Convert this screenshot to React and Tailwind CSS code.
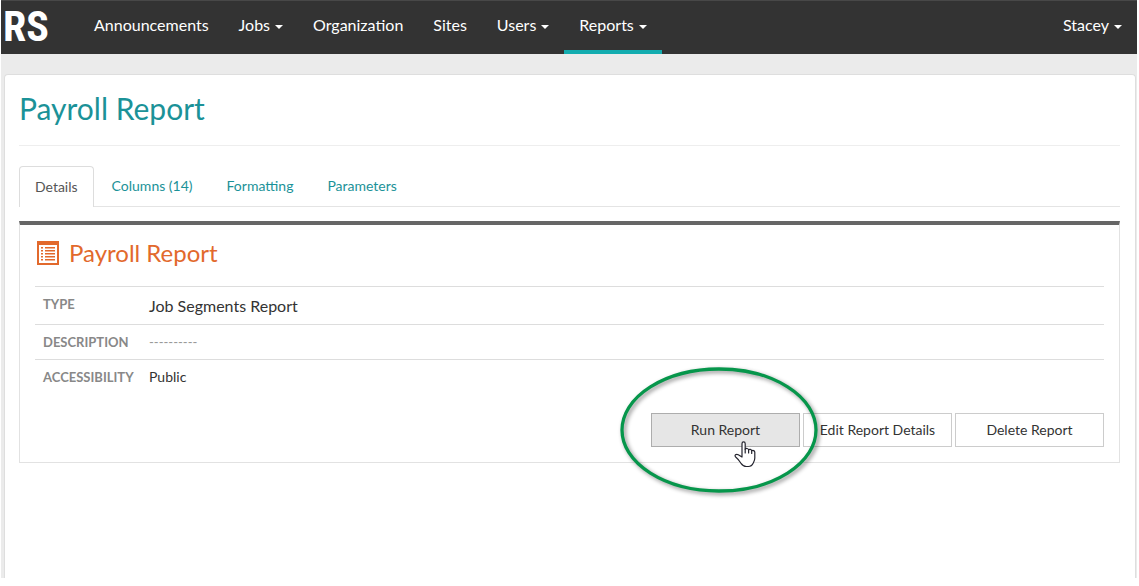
const navItems = [
  { label: 'Announcements' },
  { label: 'Jobs', menu: true },
  { label: 'Organization' },
  { label: 'Sites' },
  { label: 'Users', menu: true },
  { label: 'Reports', menu: true, active: true },
];

const tabs = ['Details', 'Columns (14)', 'Formatting', 'Parameters'];

function Caret() {
  return (
    <svg className="ml-[5px] mt-1 h-1 w-2" viewBox="0 0 8 4" fill="currentColor" aria-hidden="true">
      <path d="M0 0h8L4 4z" />
    </svg>
  );
}

function NavLink({ item }) {
  return (
    <a
      href="#"
      className={`flex h-full items-center border-b-4 px-[15px] pb-0.5 text-white ${
        item.active ? 'border-[#13acaf]' : 'border-transparent'
      }`}
    >
      {item.label}
      {item.menu && <Caret />}
    </a>
  );
}

function ListIcon() {
  return (
    <svg className="h-6 w-[22px] shrink-0" viewBox="0 0 22 24" fill="currentColor" aria-hidden="true">
      <path fillRule="evenodd" d="M0 0h22v24H0zM2 4v18h18V4z" />
      <path d="M4 6h2v1.5H4zM8 6h10v1.5H8zM4 9h2v1.5H4zM8 9h10v1.5H8zM4 12h2v1.5H4zM8 12h10v1.5H8zM4 15h2v1.5H4zM8 15h10v1.5H8zM4 18h2v1.5H4zM8 18h10v1.5H8z" />
    </svg>
  );
}

function Highlight() {
  return (
    <svg
      className="pointer-events-none absolute -left-9 -top-12 z-10 h-[136px] w-[208px]"
      viewBox="0 0 208 136"
      fill="none"
      aria-hidden="true"
    >
      <ellipse
        cx="104"
        cy="65"
        rx="97"
        ry="61"
        stroke="#06964b"
        strokeWidth="3.3"
        className="drop-shadow-[2px_2px_2px_rgba(0,0,0,0.45)]"
      />
    </svg>
  );
}

function HandCursor() {
  return (
    <svg
      className="pointer-events-none absolute left-[83px] top-7 z-20 h-[27px] w-[22px]"
      viewBox="0 0 22 27"
      fill="#fff"
      stroke="#24242e"
      strokeWidth="1.2"
      strokeLinecap="round"
      strokeLinejoin="round"
      aria-hidden="true"
    >
      <path d="M8 16V2.7C8 .3 11.2 .3 11.2 2.7V8.2c.8-1.2 3.2-.9 3.4.7.8-1 2.9-.7 3.1.9 1-.8 3.1-.3 3.1 1.5V17c0 2.6-.9 3.8-1.7 5.3-.9 2.2-2.3 3.2-4.8 3.2h-2c-2.6 0-4-1.4-5.3-3.2-1.5-2.1-2.9-4.3-5.3-6.3-1.8-1.9.4-3.4 2.6-2.3z" />
      <path d="M11.2 8v4M14.6 8.9V12M17.7 9.8V12.5" fill="none" />
    </svg>
  );
}

const actionClass = 'h-[34px] w-[149px] whitespace-nowrap border text-sm text-[#333]';

export default function App() {
  return (
    <div className="min-h-screen bg-white pb-2 pl-px pr-0.5 font-['Lato',sans-serif] text-sm text-[#333]">
      <div className="flex min-h-[578px] flex-col bg-[#ebebeb]">
        <header className="flex h-[54px] items-stretch border-t border-[#484848] bg-[#333] text-base">
          <a
            href="#"
            aria-label="RS home"
            className="flex w-[78px] items-center pb-0.5 pl-0.5 font-['Roboto_Condensed','Open_Sans_Condensed','DejaVu_Sans_Condensed',sans-serif] text-[42px] font-bold leading-none text-white"
          >
            RS
          </a>
          <nav className="flex flex-1">
            {navItems.map((item) => (
              <NavLink key={item.label} item={item} />
            ))}
          </nav>
          <NavLink item={{ label: 'Stacey', menu: true }} />
        </header>

        <main className="ml-[3px] mr-px mt-5 flex-1 rounded-t border border-b-0 border-[#dedede] bg-white pl-3.5 pr-[15px]">
          <h1 className="border-b border-[#eee] pb-[19px] pt-[15px] text-[30px] leading-9 text-[#1b9298]">
            Payroll Report
          </h1>

          <div role="tablist" className="mt-5 flex h-[41px] border-b border-[#e4e4e4]">
            {tabs.map((tab, i) => (
              <button
                key={tab}
                type="button"
                role="tab"
                aria-selected={i === 0}
                className={
                  i === 0
                    ? '-mb-px mr-0.5 rounded-t border border-b-0 border-[#ddd] bg-white px-[15px] text-sm text-[#555]'
                    : 'mr-0.5 px-4 text-sm text-[#1b9298]'
                }
              >
                {tab}
              </button>
            ))}
          </div>

          <section className="mt-3.5 border border-t-4 border-[#e2e2e2] border-t-[#666] px-[15px] pb-[15px] pt-2.5">
            <h2 className="flex items-center gap-2.5 pb-4 pl-0.5 text-2xl leading-[35px] text-[#e2692c]">
              <ListIcon />
              Payroll Report
            </h2>
            <table className="w-full text-left">
              <tbody>
                <tr className="h-[38px] border-t border-[#ddd] align-top">
                  <th scope="row" className="w-[114px] pl-2 pt-2 text-[13px] leading-[18px] text-[#888]">
                    TYPE
                  </th>
                  <td className="pt-2 text-base leading-[22px]">Job Segments Report</td>
                </tr>
                <tr className="h-[35px] border-t border-[#ddd] align-top">
                  <th scope="row" className="pl-2 pt-2 text-[13px] leading-[18px] text-[#888]">
                    DESCRIPTION
                  </th>
                  <td className="pt-2 text-[13px] leading-[18px] text-[#999]">----------</td>
                </tr>
                <tr className="h-[35px] border-t border-[#ddd] align-top">
                  <th scope="row" className="pl-2 pt-2 text-[13px] leading-[18px] text-[#888]">
                    ACCESSIBILITY
                  </th>
                  <td className="pt-2 text-sm leading-[18px]">Public</td>
                </tr>
              </tbody>
            </table>
            <div className="mt-[18px] flex justify-end gap-[3px]">
              <div className="relative">
                <button type="button" className={`${actionClass} border-[#adadad] bg-[#e6e6e6]`}>
                  Run Report
                </button>
                <Highlight />
                <HandCursor />
              </div>
              <button type="button" className={`${actionClass} border-[#ccc] bg-white`}>
                Edit Report Details
              </button>
              <button type="button" className={`${actionClass} border-[#ccc] bg-white`}>
                Delete Report
              </button>
            </div>
          </section>
        </main>
      </div>
    </div>
  );
}
